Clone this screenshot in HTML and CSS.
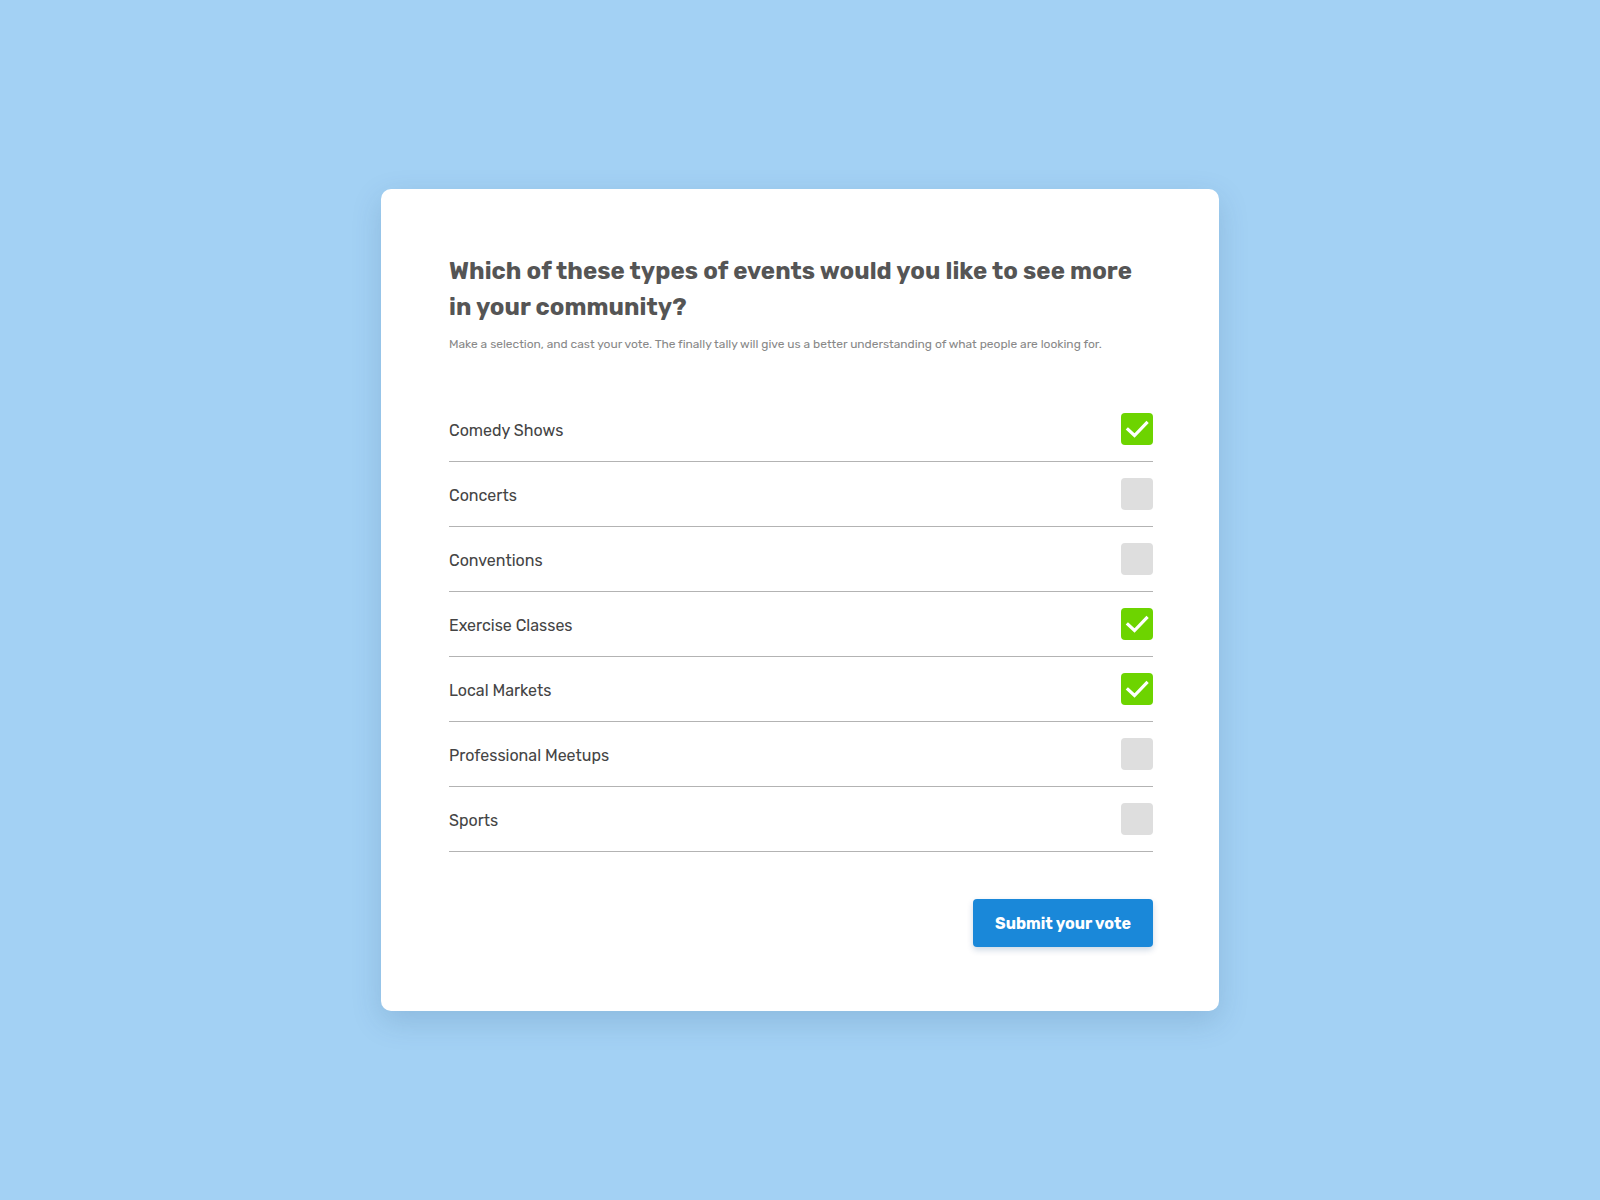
FILE: index.html
```html
<!DOCTYPE html>
<html lang="en">
<head>
<meta charset="utf-8">
<title>Community Events Poll</title>
<link rel="stylesheet" href="styles.css">
</head>
<body>
<main class="page">
  <section class="card">
    <h1 class="title">Which of these types of events would you like to see more in your community?</h1>
    <p class="subtitle">Make a selection, and cast your vote. The finally tally will give us a better understanding of what people are looking for.</p>
    <ul class="options">
      <li class="option"><span class="label">Comedy Shows</span><span class="box checked"><svg viewBox="0 0 32 32" width="32" height="32"><path d="M7 16.5 L13.5 22.5 L25.5 10" fill="none" stroke="#fff" stroke-width="3.2" stroke-linecap="square"/></svg></span></li>
      <li class="option"><span class="label">Concerts</span><span class="box"></span></li>
      <li class="option"><span class="label">Conventions</span><span class="box"></span></li>
      <li class="option"><span class="label">Exercise Classes</span><span class="box checked"><svg viewBox="0 0 32 32" width="32" height="32"><path d="M7 16.5 L13.5 22.5 L25.5 10" fill="none" stroke="#fff" stroke-width="3.2" stroke-linecap="square"/></svg></span></li>
      <li class="option"><span class="label">Local Markets</span><span class="box checked"><svg viewBox="0 0 32 32" width="32" height="32"><path d="M7 16.5 L13.5 22.5 L25.5 10" fill="none" stroke="#fff" stroke-width="3.2" stroke-linecap="square"/></svg></span></li>
      <li class="option"><span class="label">Professional Meetups</span><span class="box"></span></li>
      <li class="option"><span class="label">Sports</span><span class="box"></span></li>
    </ul>
    <div class="actions">
      <button class="submit" type="button">Submit your vote</button>
    </div>
  </section>
</main>
</body>
</html>
```

FILE: styles.css
```css
* { box-sizing: border-box; }
html, body { margin: 0; padding: 0; }
body {
  background: #a3d1f4;
  font-family: "Rubik", Inter, "Noto Sans", sans-serif;
  min-height: 1200px;
}
.page {
  min-height: 1200px;
  display: flex;
  align-items: center;
  justify-content: center;
}
.card {
  width: 838px;
  background: #fff;
  border-radius: 10px;
  padding: 64px 66px 64px 68px;
  box-shadow: 0 10px 30px rgba(40, 80, 120, 0.18);
}
.title {
  margin: 0;
  font-size: 24px;
  line-height: 36px;
  font-weight: 700;
  color: #555;
  letter-spacing: 0.05px;
}
.subtitle {
  margin: 10px 0 0;
  font-size: 12px;
  line-height: 18px;
  color: #888;
  letter-spacing: -0.02px;
}
.options {
  list-style: none;
  margin: 44px 0 0;
  padding: 0;
}
.option {
  display: flex;
  align-items: center;
  justify-content: space-between;
  padding: 16px 0;
  border-bottom: 1px solid #b3b3b3;
}
.label {
  font-size: 16px;
  line-height: 20px;
  padding-top: 4px;
  color: #444;
}
.box {
  width: 32px;
  height: 32px;
  border-radius: 4px;
  background: #dedede;
  display: flex;
}
.box.checked { background: #6dd400; }
.actions {
  display: flex;
  justify-content: flex-end;
  margin-top: 47px;
}
.submit {
  width: 180px;
  height: 48px;
  border: none;
  border-radius: 4px;
  background: #1a88d9;
  color: #fff;
  font-family: inherit;
  font-size: 16px;
  font-weight: 700;
  box-shadow: 0 3px 6px rgba(0, 60, 120, 0.2);
}
```
